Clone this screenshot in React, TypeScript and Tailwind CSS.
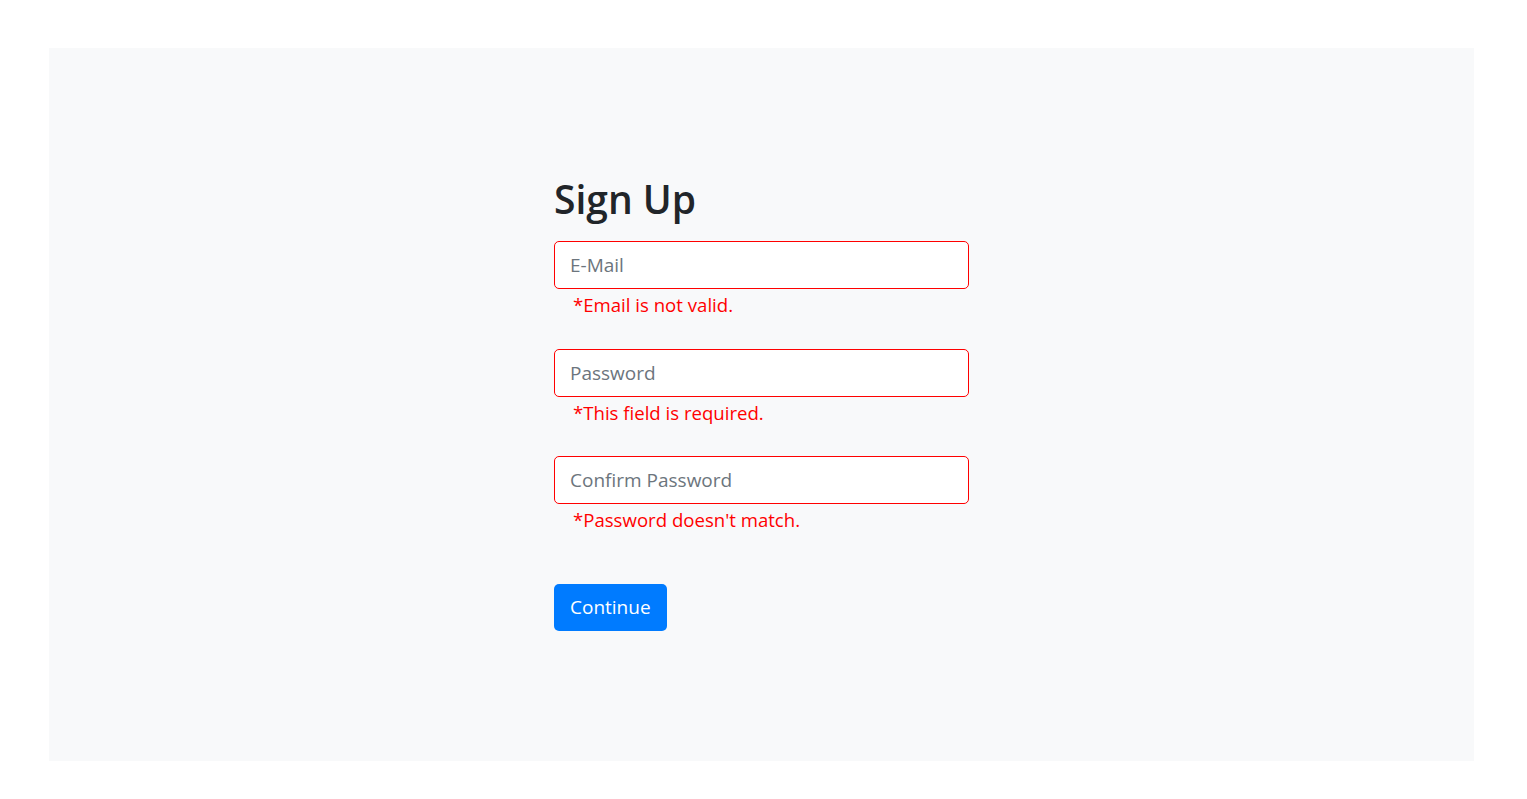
export default function App() {
	const fields = [
		{ placeholder: 'E-Mail', error: '*Email is not valid.', type: 'email', gap: 'mb-[29px]' },
		{ placeholder: 'Password', error: '*This field is required.', type: 'password', gap: 'mb-[28px]' },
		{ placeholder: 'Confirm Password', error: "*Password doesn't match.", type: 'password', gap: 'mb-[28px]' },
	]

	return (
		<div
			className="min-h-[799px] w-full bg-white pt-[48px]"
			style={{ fontFamily: '"Open Sans", "Noto Sans", sans-serif' }}
		>
			<div className="ml-[49px] flex h-[713px] w-[1425px] items-start justify-center bg-[#f8f9fa] pt-[127px]">
				<form className="w-[415px]" onSubmit={e => e.preventDefault()}>
					<h1 className="mb-[18px] text-[39px] leading-[48px] font-semibold text-[#212529]">Sign Up</h1>
					{fields.map(f => (
						<div key={f.placeholder} className={f.gap}>
							<input
								type={f.type}
								placeholder={f.placeholder}
								className="block h-[48px] w-full rounded-[5px] border border-[#ff0000] bg-white pr-4 pl-[15px] text-[19px] text-[#495057] outline-none placeholder:text-[#6c757d]"
							/>
							<div className="pt-[1px] pl-[19px] text-[18.6px] leading-[30px] text-[#ff0000]">{f.error}</div>
						</div>
					))}
					<button
						type="submit"
						className="mt-[21px] h-[47px] rounded-[5px] bg-[#007bff] px-4 text-[19px] text-white"
					>
						Continue
					</button>
				</form>
			</div>
		</div>
	)
}
